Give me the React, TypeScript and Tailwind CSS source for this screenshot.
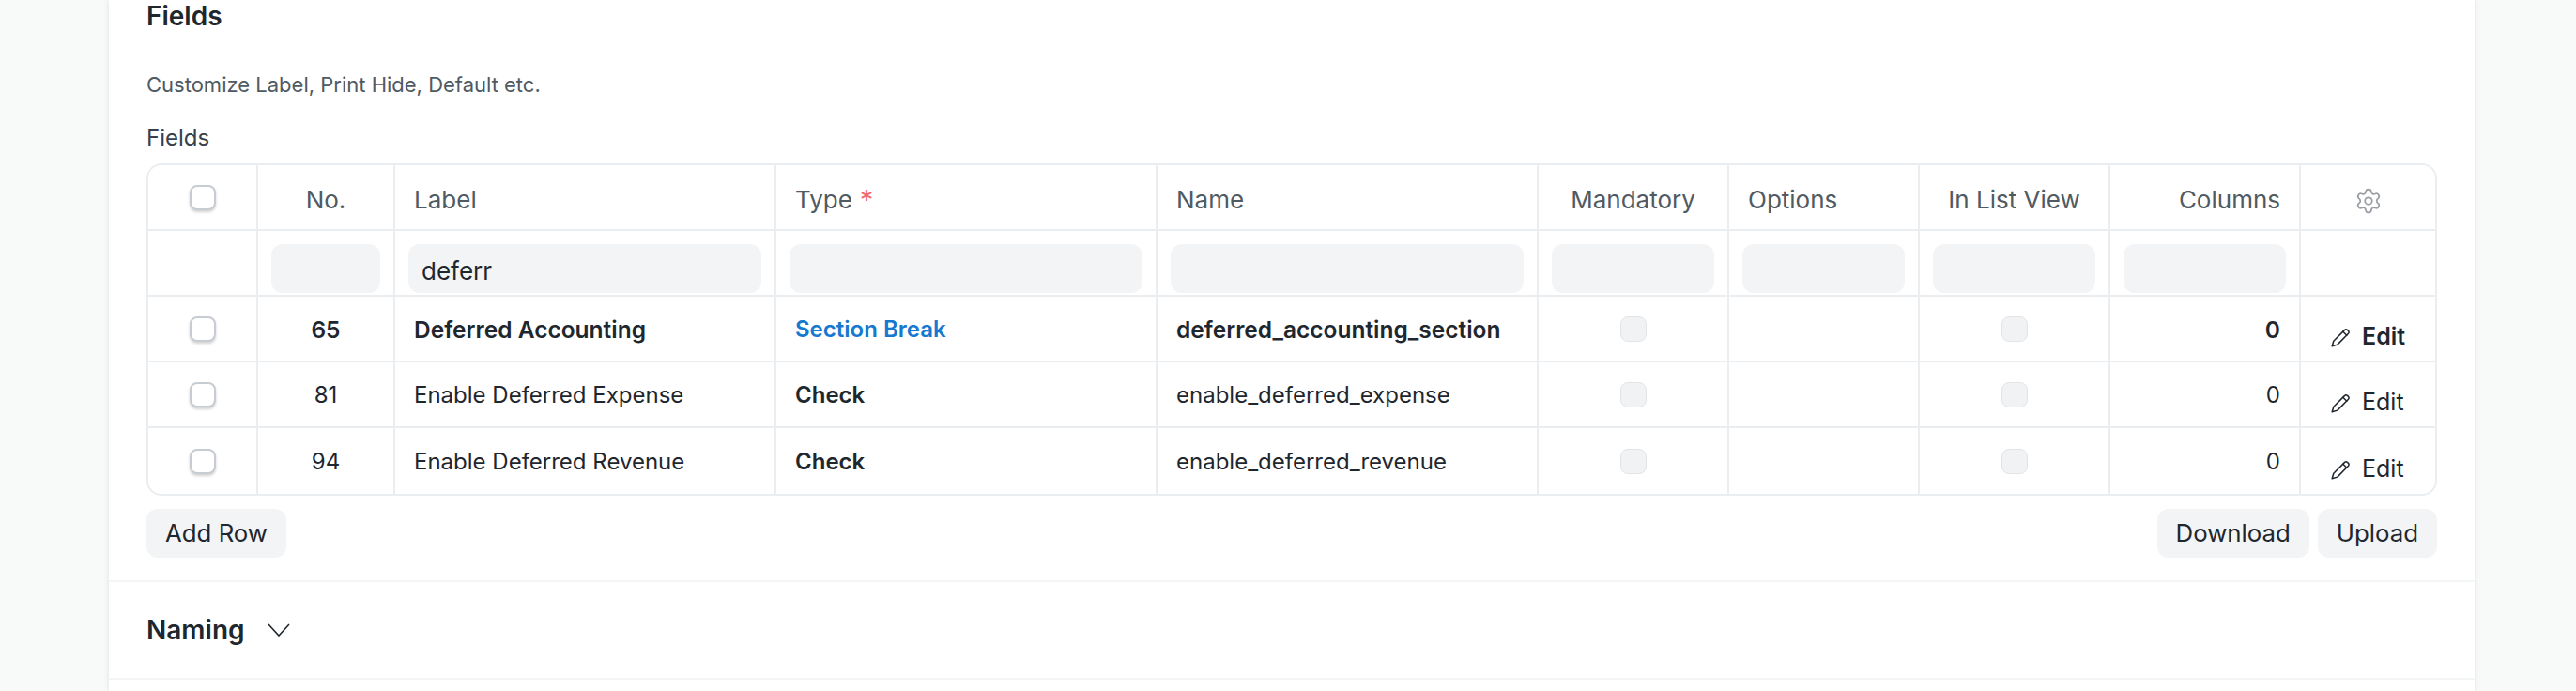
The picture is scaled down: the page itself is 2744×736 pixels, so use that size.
import { Settings } from "lucide-react";

const gridCols = "grid grid-cols-[117px_146px_406px_406px_406px_203px_203px_203px_203px_143px]";
const cell = "flex items-center border-r-2 border-[#ebeef0] px-5";
const headCell = "flex items-center border-r-2 border-[#ebeef0] px-5 pt-1";
const textCell = "flex items-center border-r-2 border-[#ebeef0] px-5 pt-0.5";

const rows = [
  { no: "65", label: "Deferred Accounting", type: "Section Break", name: "deferred_accounting_section", bold: true },
  { no: "81", label: "Enable Deferred Expense", type: "Check", name: "enable_deferred_expense", bold: false },
  { no: "94", label: "Enable Deferred Revenue", type: "Check", name: "enable_deferred_revenue", bold: false },
];

function Checkbox() {
  return (
    <span className="block h-[27px] w-[28px] rounded-lg border-2 border-[#c6ccd2] bg-white shadow-[0_2px_3px_rgba(0,0,0,0.18)]" />
  );
}

function DisabledCheckbox() {
  return <span className="block h-[27px] w-[28px] rounded-lg border border-[#e2e5e8] bg-[#f1f2f3]" />;
}

function PencilIcon() {
  return (
    <svg width="21" height="21" viewBox="0 0 21 21" fill="none" stroke="#1f272e" strokeWidth="1.5" strokeLinejoin="round" strokeLinecap="round">
      <path d="M1.2 19.8l1.6-5.6L14.6 2.4a2 2 0 0 1 2.9 0l1 1a2 2 0 0 1 0 2.9L6.8 18.1z" />
      <path d="M12.8 4.2l4 4" />
    </svg>
  );
}

function Header() {
  return (
    <div className={`${gridCols} h-[70px] border-b-2 border-[#ebeef0] text-[26px] text-[#505a62]`}>
      <div className={`${cell} justify-center`}><Checkbox /></div>
      <div className={`${headCell} justify-center`}>No.</div>
      <div className={headCell}>Label</div>
      <div className={headCell}>
        Type <span className="ml-2 text-[29px] leading-none text-[#ee6b6b]">*</span>
      </div>
      <div className={headCell}>Name</div>
      <div className={`${headCell} justify-center`}>Mandatory</div>
      <div className={headCell}>Options</div>
      <div className={`${headCell} justify-center`}>In List View</div>
      <div className={`${headCell} justify-end`}>Columns</div>
      <div className="flex items-center justify-center pt-[7px]">
        <Settings size={30} strokeWidth={1.4} className="text-[#9a9fa5]" />
      </div>
    </div>
  );
}

function FilterRow() {
  const inputs = ["", "deferr", "", "", "", "", "", ""];
  return (
    <div className={`${gridCols} h-[70px] border-b-2 border-[#ebeef0]`}>
      <div className="border-r-2 border-[#ebeef0]" />
      {inputs.map((value, i) => (
        <div key={i} className="border-r-2 border-[#ebeef0] px-[14px] pt-[14px]">
          <div className="flex h-[52px] items-center rounded-xl bg-[#f3f4f6] px-[14px] pt-1 text-[26px] text-[#1f272e]">{value}</div>
        </div>
      ))}
      <div />
    </div>
  );
}

function Row({ row, last }: { row: (typeof rows)[number]; last: boolean }) {
  const weight = row.bold ? "font-semibold text-[24.5px]" : "text-[24px]";
  return (
    <div className={`${gridCols} h-[70px] text-[#1f272e] ${last ? "h-[68px]" : "border-b-2 border-[#ebeef0]"}`}>
      <div className={`${cell} justify-center`}><Checkbox /></div>
      <div className={`${textCell} justify-center ${weight}`}>{row.no}</div>
      <div className={`${textCell} ${weight}`}>{row.label}</div>
      <div className={`${textCell} text-[24px] font-semibold ${row.bold ? "text-[#1579d0]" : ""}`}>{row.type}</div>
      <div className={`${textCell} ${weight}`}>{row.name}</div>
      <div className={`${cell} justify-center`}><DisabledCheckbox /></div>
      <div className={cell} />
      <div className={`${cell} justify-center`}><DisabledCheckbox /></div>
      <div className={`${textCell} justify-end ${weight}`}>0</div>
      <div className={`flex items-center gap-3 pl-8 pt-[18px] text-[25px] ${row.bold ? "font-semibold" : ""}`}>
        <PencilIcon />
        <span>Edit</span>
      </div>
    </div>
  );
}

export default function App() {
  return (
    <div className="h-[736px] overflow-hidden bg-[#f8f9f9] px-[116px] font-['Inter',sans-serif]">
      <div className="h-full w-[2520px] bg-white shadow-[0_0_6px_rgba(0,0,0,0.1)]">
        <div className="px-10 pb-6">
          <h2 className="text-[28px] font-semibold leading-[34px] text-[#1f272e]">Fields</h2>
          <p className="mt-[41px] text-[22px] leading-[30px] text-[#505a62]">Customize Label, Print Hide, Default etc.</p>
          <p className="mt-[27px] text-[24px] leading-[30px] text-[#36414c]">Fields</p>
          <div className="mt-[12px] overflow-hidden rounded-2xl border-2 border-[#ebeef0]">
            <Header />
            <FilterRow />
            {rows.map((row, i) => (
              <Row key={row.no} row={row} last={i === rows.length - 1} />
            ))}
          </div>
          <div className="mt-[14px] flex items-center justify-between text-[25.8px] text-[#1f272e]">
            <button className="h-[52px] rounded-xl bg-[#f3f4f6] px-5">Add Row</button>
            <div className="flex gap-[9px]">
              <button className="h-[52px] rounded-xl bg-[#f3f4f6] px-5">Download</button>
              <button className="h-[52px] rounded-xl bg-[#f3f4f6] px-5">Upload</button>
            </div>
          </div>
        </div>
        <div className="flex h-[106px] items-center gap-6 border-y-2 border-[#f4f5f6] px-10">
          <h2 className="text-[28px] font-semibold text-[#1f272e]">Naming</h2>
          <svg width="24" height="14" viewBox="0 0 24 14" fill="none" stroke="#1f272e" strokeWidth="1.6">
            <path d="M1 1l11 12L23 1" />
          </svg>
        </div>
      </div>
    </div>
  );
}
